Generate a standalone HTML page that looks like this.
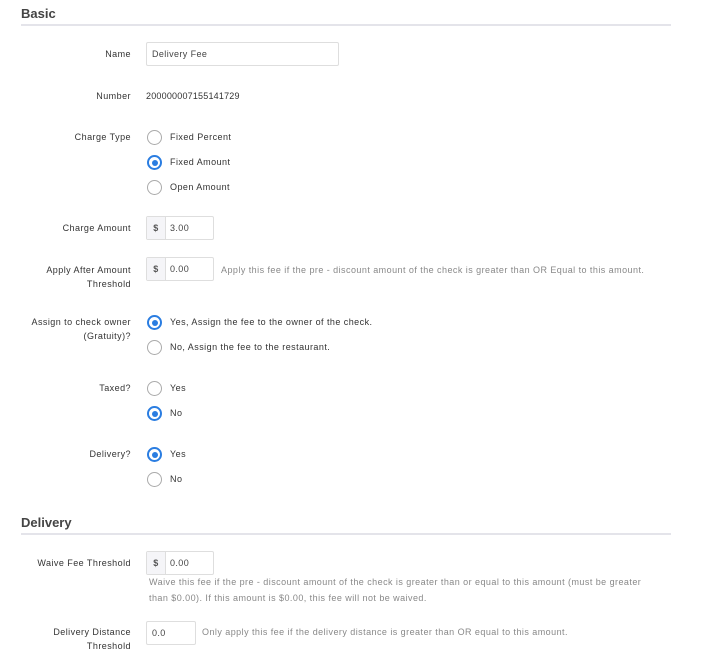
<!DOCTYPE html>
<html><head><meta charset="utf-8"><style>
body{margin:0;width:715px;height:669px;background:#fff;font-family:"Liberation Sans",sans-serif;color:#333;position:relative;overflow:hidden}
.a{position:absolute;font-size:9px;line-height:14px;white-space:nowrap;letter-spacing:0.45px}
.l{text-align:right;right:584px}
.h{position:absolute;left:21px;font-size:13px;font-weight:bold;color:#444}
.line{position:absolute;left:21px;width:650px;height:2px;background:#e4e4ea}
.box{position:absolute;border:1px solid #dedede;border-radius:2px;background:#fff;box-sizing:border-box;font-size:9px;color:#444;letter-spacing:0.4px}
.pre{position:absolute;left:0;top:0;bottom:0;width:18px;background:#f5f5f8;border-right:1px solid #dedede;text-align:center;font-weight:bold;color:#555}
.r{position:absolute;width:15px;height:15px;border-radius:50%;box-sizing:border-box;border:1.5px solid #aaa;left:147px}
.r.on{border:2px solid #2a7de1}
.r.on::after{content:"";position:absolute;left:2.5px;top:2.5px;width:6px;height:6px;border-radius:50%;background:#2a7de1}
.help{color:#888}
</style></head><body>
<div class="h" style="top:6px">Basic</div><div class="line" style="top:24px"></div>

<div class="a l" style="top:47px">Name</div>
<div class="box" style="left:146px;top:42px;width:193px;height:24px;line-height:22px;padding-left:5px">Delivery Fee</div>

<div class="a l" style="top:89px">Number</div>
<div class="a" style="left:146px;top:89px;letter-spacing:0.2px">200000007155141729</div>

<div class="a l" style="top:130px">Charge Type</div>
<div class="r" style="top:130px"></div><div class="a" style="left:170px;top:130px">Fixed Percent</div>
<div class="r on" style="top:155px"></div><div class="a" style="left:170px;top:155px">Fixed Amount</div>
<div class="r" style="top:180px"></div><div class="a" style="left:170px;top:180px">Open Amount</div>

<div class="a l" style="top:221px">Charge Amount</div>
<div class="box" style="left:146px;top:216px;width:68px;height:24px;line-height:22px;padding-left:23px"><span class="pre">$</span>3.00</div>

<div class="a l" style="top:263px;text-align:right">Apply After Amount<br>Threshold</div>
<div class="box" style="left:146px;top:257px;width:68px;height:24px;line-height:22px;padding-left:23px"><span class="pre">$</span>0.00</div>
<div class="a help" style="left:221px;top:263px">Apply this fee if the pre - discount amount of the check is greater than OR Equal to this amount.</div>

<div class="a l" style="top:315px;text-align:right">Assign to check owner<br>(Gratuity)?</div>
<div class="r on" style="top:315px"></div><div class="a" style="left:170px;top:315px">Yes, Assign the fee to the owner of the check.</div>
<div class="r" style="top:340px"></div><div class="a" style="left:170px;top:340px">No, Assign the fee to the restaurant.</div>

<div class="a l" style="top:381px">Taxed?</div>
<div class="r" style="top:381px"></div><div class="a" style="left:170px;top:381px">Yes</div>
<div class="r on" style="top:406px"></div><div class="a" style="left:170px;top:406px">No</div>

<div class="a l" style="top:447px">Delivery?</div>
<div class="r on" style="top:447px"></div><div class="a" style="left:170px;top:447px">Yes</div>
<div class="r" style="top:472px"></div><div class="a" style="left:170px;top:472px">No</div>

<div class="h" style="top:515px">Delivery</div><div class="line" style="top:533px"></div>

<div class="a l" style="top:556px">Waive Fee Threshold</div>
<div class="box" style="left:146px;top:551px;width:68px;height:24px;line-height:22px;padding-left:23px"><span class="pre">$</span>0.00</div>
<div class="a help" style="left:149px;top:574px;line-height:16px">Waive this fee if the pre - discount amount of the check is greater than or equal to this amount (must be greater<br>than $0.00). If this amount is $0.00, this fee will not be waived.</div>

<div class="a l" style="top:625px;text-align:right">Delivery Distance<br>Threshold</div>
<div class="box" style="left:146px;top:621px;width:50px;height:24px;line-height:22px;padding-left:5px">0.0</div>
<div class="a help" style="left:202px;top:625px">Only apply this fee if the delivery distance is greater than OR equal to this amount.</div>
</body></html>
